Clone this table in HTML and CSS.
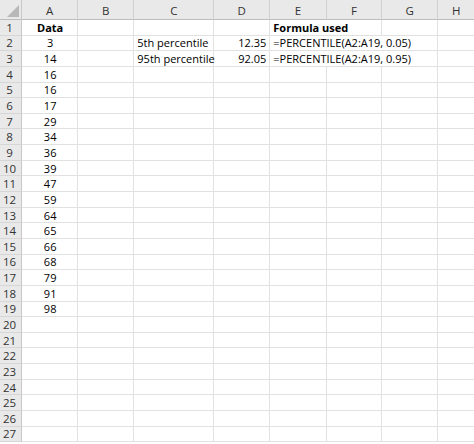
FILE: index.html
```html
<!DOCTYPE html>
<html>
<head>
<meta charset="utf-8">
<link rel="stylesheet" href="styles.css">
</head>
<body>
<div class="sheet">
  <div class="corner"><span class="tri"></span></div>
  <div class="ch">A</div><div class="ch">B</div><div class="ch">C</div><div class="ch">D</div><div class="ch">E</div><div class="ch">F</div><div class="ch">G</div><div class="ch last">H</div>

  <div class="rh">1</div><div class="c ctr b">Data</div><div class="c"></div><div class="c"></div><div class="c"></div><div class="c s2 b">Formula used</div><div class="c"></div><div class="c last"></div>
  <div class="rh">2</div><div class="c ctr">3</div><div class="c"></div><div class="c">5th percentile</div><div class="c r">12.35</div><div class="c s3">=PERCENTILE(A2:A19, 0.05)</div><div class="c last"></div>
  <div class="rh">3</div><div class="c ctr">14</div><div class="c"></div><div class="c">95th percentile</div><div class="c r">92.05</div><div class="c s3">=PERCENTILE(A2:A19, 0.95)</div><div class="c last"></div>
  <div class="rh">4</div><div class="c ctr">16</div><div class="c"></div><div class="c"></div><div class="c"></div><div class="c"></div><div class="c"></div><div class="c"></div><div class="c last"></div>
  <div class="rh">5</div><div class="c ctr">16</div><div class="c"></div><div class="c"></div><div class="c"></div><div class="c"></div><div class="c"></div><div class="c"></div><div class="c last"></div>
  <div class="rh">6</div><div class="c ctr">17</div><div class="c"></div><div class="c"></div><div class="c"></div><div class="c"></div><div class="c"></div><div class="c"></div><div class="c last"></div>
  <div class="rh">7</div><div class="c ctr">29</div><div class="c"></div><div class="c"></div><div class="c"></div><div class="c"></div><div class="c"></div><div class="c"></div><div class="c last"></div>
  <div class="rh">8</div><div class="c ctr">34</div><div class="c"></div><div class="c"></div><div class="c"></div><div class="c"></div><div class="c"></div><div class="c"></div><div class="c last"></div>
  <div class="rh">9</div><div class="c ctr">36</div><div class="c"></div><div class="c"></div><div class="c"></div><div class="c"></div><div class="c"></div><div class="c"></div><div class="c last"></div>
  <div class="rh">10</div><div class="c ctr">39</div><div class="c"></div><div class="c"></div><div class="c"></div><div class="c"></div><div class="c"></div><div class="c"></div><div class="c last"></div>
  <div class="rh">11</div><div class="c ctr">47</div><div class="c"></div><div class="c"></div><div class="c"></div><div class="c"></div><div class="c"></div><div class="c"></div><div class="c last"></div>
  <div class="rh">12</div><div class="c ctr">59</div><div class="c"></div><div class="c"></div><div class="c"></div><div class="c"></div><div class="c"></div><div class="c"></div><div class="c last"></div>
  <div class="rh">13</div><div class="c ctr">64</div><div class="c"></div><div class="c"></div><div class="c"></div><div class="c"></div><div class="c"></div><div class="c"></div><div class="c last"></div>
  <div class="rh">14</div><div class="c ctr">65</div><div class="c"></div><div class="c"></div><div class="c"></div><div class="c"></div><div class="c"></div><div class="c"></div><div class="c last"></div>
  <div class="rh">15</div><div class="c ctr">66</div><div class="c"></div><div class="c"></div><div class="c"></div><div class="c"></div><div class="c"></div><div class="c"></div><div class="c last"></div>
  <div class="rh">16</div><div class="c ctr">68</div><div class="c"></div><div class="c"></div><div class="c"></div><div class="c"></div><div class="c"></div><div class="c"></div><div class="c last"></div>
  <div class="rh">17</div><div class="c ctr">79</div><div class="c"></div><div class="c"></div><div class="c"></div><div class="c"></div><div class="c"></div><div class="c"></div><div class="c last"></div>
  <div class="rh">18</div><div class="c ctr">91</div><div class="c"></div><div class="c"></div><div class="c"></div><div class="c"></div><div class="c"></div><div class="c"></div><div class="c last"></div>
  <div class="rh">19</div><div class="c ctr">98</div><div class="c"></div><div class="c"></div><div class="c"></div><div class="c"></div><div class="c"></div><div class="c"></div><div class="c last"></div>
  <div class="rh">20</div><div class="c"></div><div class="c"></div><div class="c"></div><div class="c"></div><div class="c"></div><div class="c"></div><div class="c"></div><div class="c last"></div>
  <div class="rh">21</div><div class="c"></div><div class="c"></div><div class="c"></div><div class="c"></div><div class="c"></div><div class="c"></div><div class="c"></div><div class="c last"></div>
  <div class="rh">22</div><div class="c"></div><div class="c"></div><div class="c"></div><div class="c"></div><div class="c"></div><div class="c"></div><div class="c"></div><div class="c last"></div>
  <div class="rh">23</div><div class="c"></div><div class="c"></div><div class="c"></div><div class="c"></div><div class="c"></div><div class="c"></div><div class="c"></div><div class="c last"></div>
  <div class="rh">24</div><div class="c"></div><div class="c"></div><div class="c"></div><div class="c"></div><div class="c"></div><div class="c"></div><div class="c"></div><div class="c last"></div>
  <div class="rh">25</div><div class="c"></div><div class="c"></div><div class="c"></div><div class="c"></div><div class="c"></div><div class="c"></div><div class="c"></div><div class="c last"></div>
  <div class="rh">26</div><div class="c"></div><div class="c"></div><div class="c"></div><div class="c"></div><div class="c"></div><div class="c"></div><div class="c"></div><div class="c last"></div>
  <div class="rh">27</div><div class="c"></div><div class="c"></div><div class="c"></div><div class="c"></div><div class="c"></div><div class="c"></div><div class="c"></div><div class="c last"></div>
</div>
</body>
</html>
```
FILE: styles.css
```css
html, body {
  margin: 0;
  padding: 0;
  background: #ffffff;
}
.sheet {
  display: grid;
  grid-template-columns: 22px 56.3px 56px 80px 56px 56.4px 55.6px 56px 1fr;
  grid-template-rows: 20px repeat(27, 15.65px);
  width: 474px;
  height: 444px;
  overflow: hidden;
  font-family: "Open Sans", "Liberation Sans", sans-serif;
  font-size: 11px;
  color: #000;
}
.corner {
  position: relative;
  background: #e9e9e9;
  border-right: 1px solid #c8c8c8;
  border-bottom: 1px solid #bdbdbd;
  box-sizing: border-box;
}
.tri {
  position: absolute;
  right: 2px;
  bottom: 2px;
  width: 0;
  height: 0;
  border-left: 12px solid transparent;
  border-bottom: 12px solid #b8b8b8;
}
.ch {
  background: #e9e9e9;
  border-right: 1px solid #d0d0d0;
  border-bottom: 1px solid #bdbdbd;
  box-sizing: border-box;
  display: flex;
  align-items: center;
  justify-content: center;
  color: #333;
  font-size: 11.5px;
  padding-top: 1px;
}
.rh {
  background: #e9e9e9;
  border-right: 1px solid #c8c8c8;
  border-bottom: 1px solid #d6d6d6;
  box-sizing: border-box;
  display: flex;
  align-items: center;
  justify-content: center;
  color: #333;
  font-size: 11.5px;
  padding-right: 2px;
}
.c {
  border-right: 1px solid #e1e1e1;
  border-bottom: 1px solid #e1e1e1;
  box-sizing: border-box;
  display: flex;
  align-items: center;
  padding: 0 2px 0 3px;
  white-space: nowrap;
  overflow: visible;
  line-height: 1;
}
.ctr { justify-content: center; }
.r { justify-content: flex-end; padding-right: 3px; }
.b { font-weight: 700; }
.s2 { grid-column: span 2; }
.s3 { grid-column: span 3; }
.last { border-right: none; }
```
